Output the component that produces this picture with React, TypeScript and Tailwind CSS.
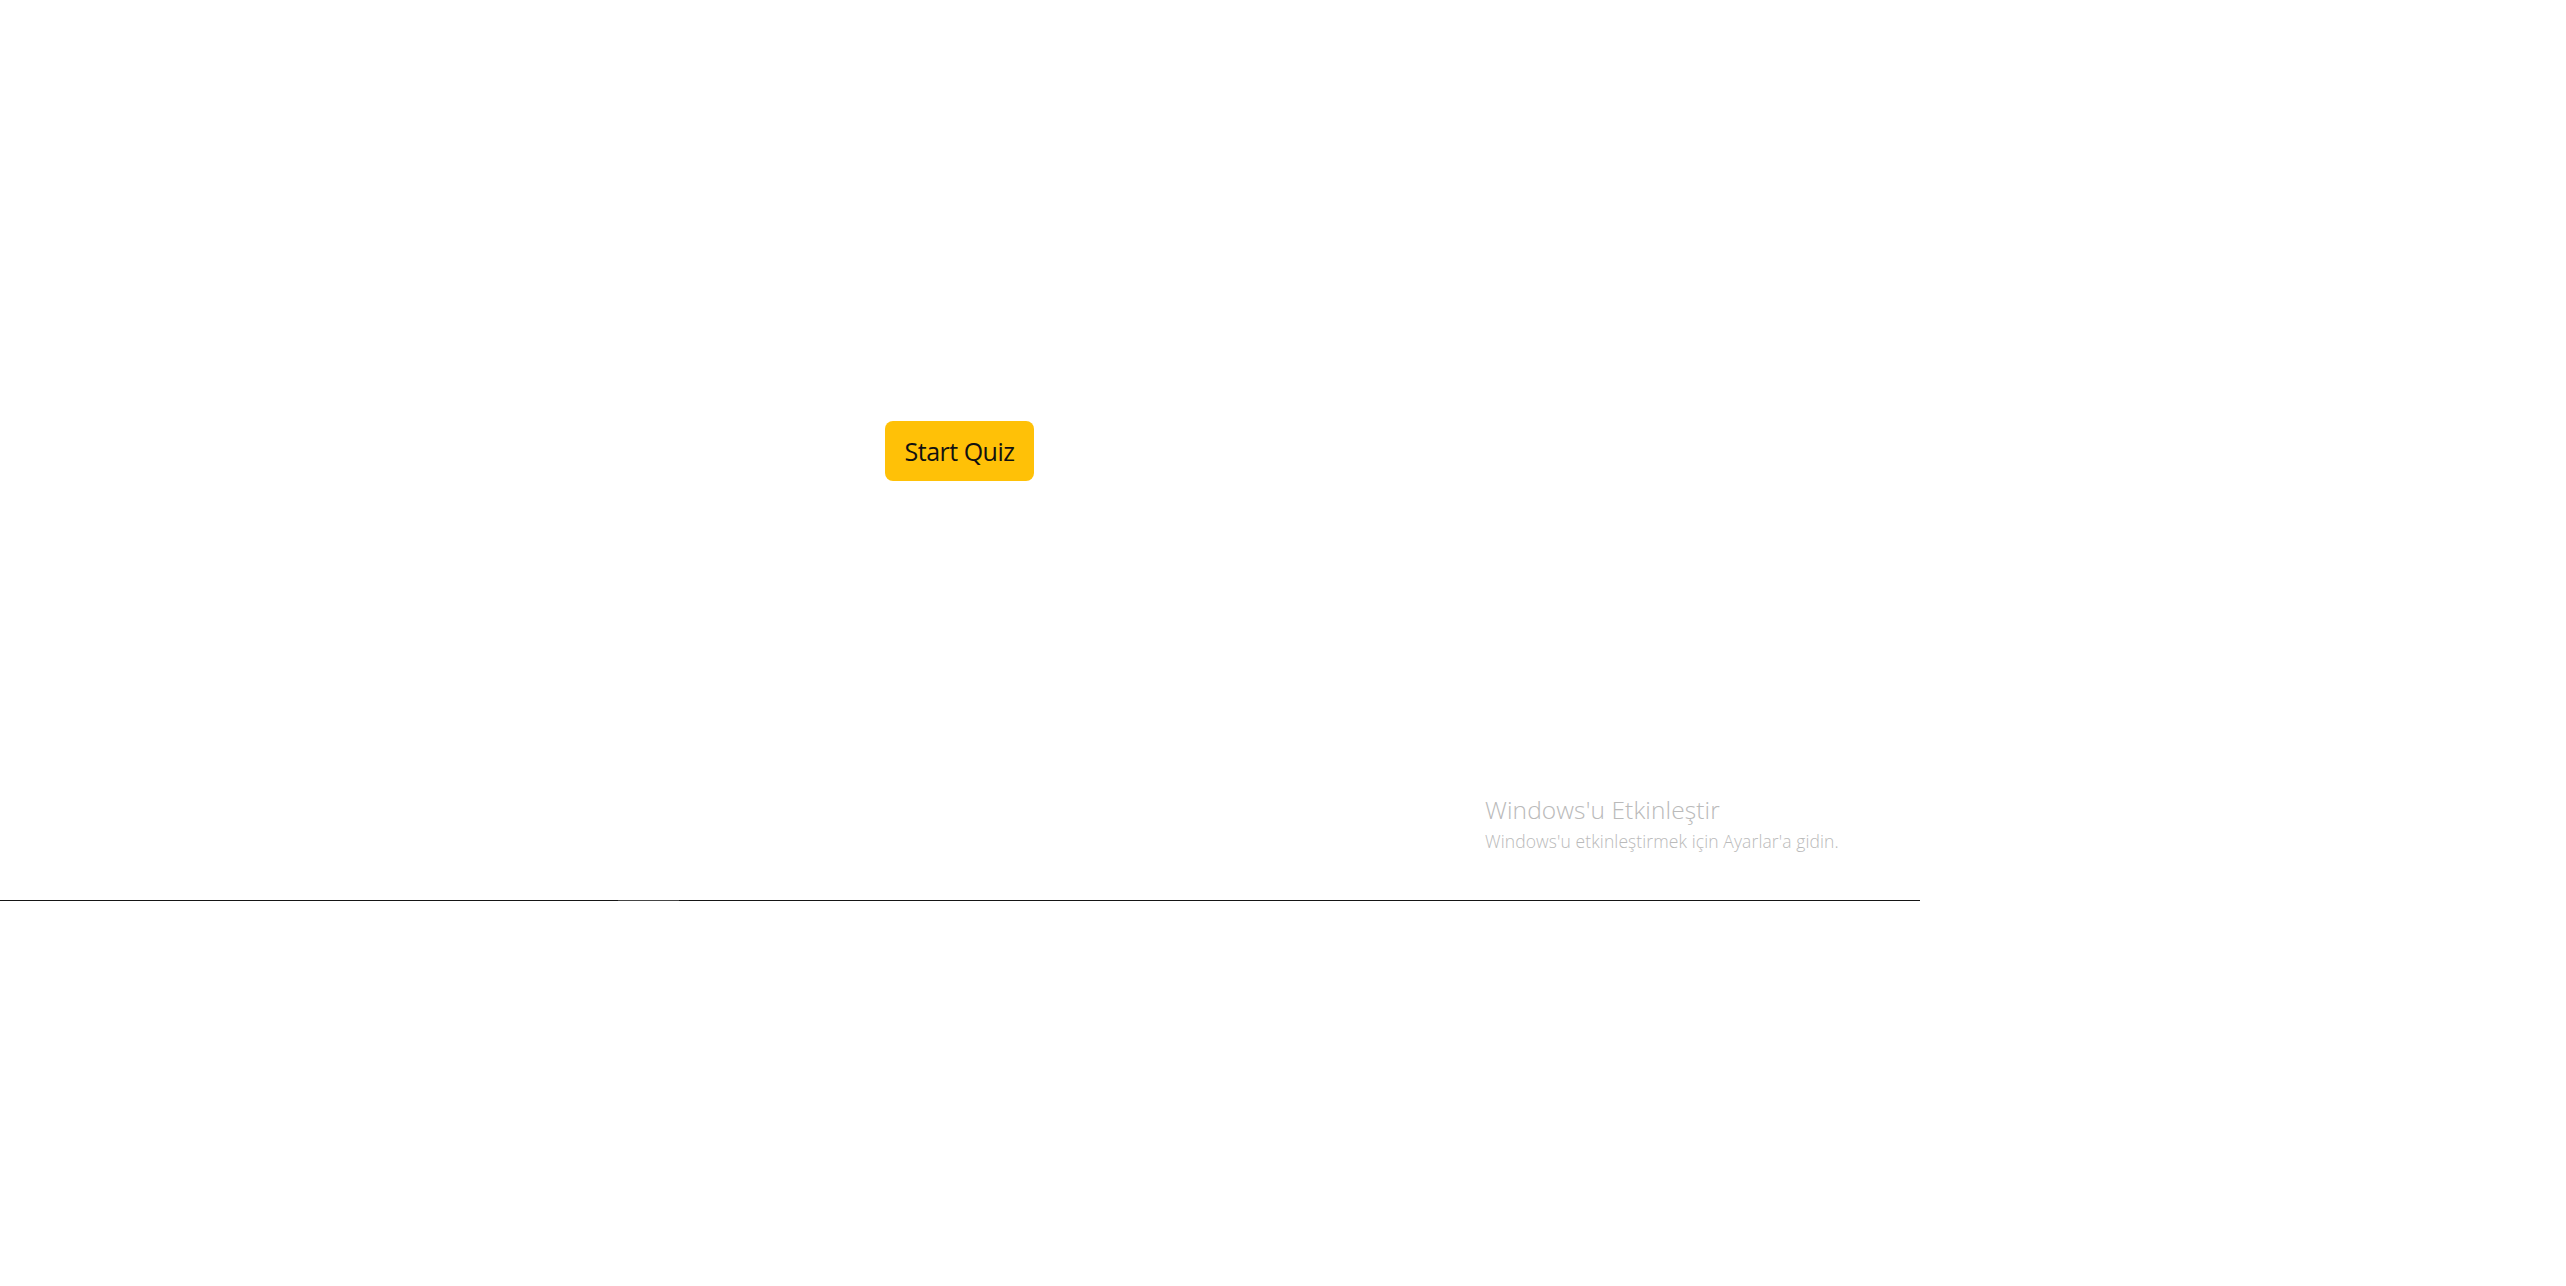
import React from "react";

// Quiz landing: single start button, with the OS activation watermark on top.
export default function App() {
  return (
    <div className="min-h-[1286px] w-full bg-white" style={{ fontFamily: '"Open Sans", "Noto Sans", sans-serif' }}>
      <div className="relative h-[901px] w-[1920px] border-b border-[#151515]">
        <div className="pl-[885px] pt-[421px]">
          <button className="h-[60px] w-[149px] rounded-[8px] bg-[#ffc107] pt-[2px] text-[25px] tracking-[-0.5px] text-[#111]">
            Start Quiz
          </button>
        </div>

        {/* activation watermark */}
        <div className="pointer-events-none absolute left-[1485px] top-[795px] text-[#bababa]">
          <div className="text-[24.5px] font-light leading-[30px] tracking-[0.1px]">Windows'u Etkinleştir</div>
          <div className="mt-[5px] text-[17.5px] font-light leading-[22px] tracking-[0.1px]">
            Windows'u etkinleştirmek için Ayarlar'a gidin.
          </div>
        </div>

        {/* lighter stretch of the bottom rule */}
        <div className="absolute bottom-[-1px] left-[618px] h-px w-[61px] bg-[#444]" />
      </div>
    </div>
  );
}
